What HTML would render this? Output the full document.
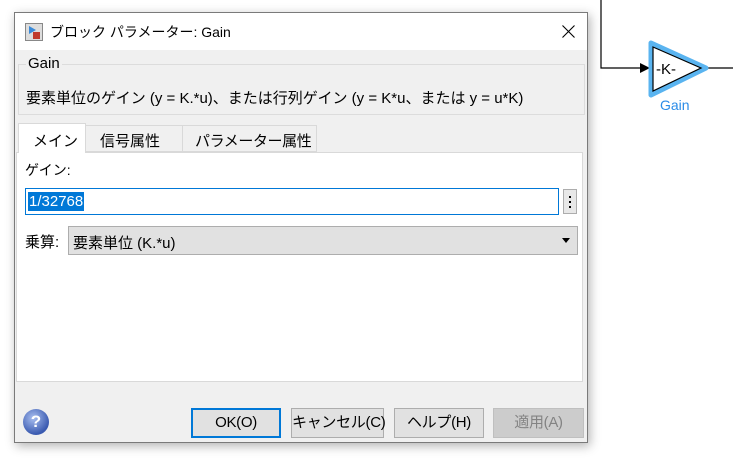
<!DOCTYPE html>
<html><head><meta charset="utf-8"><style>
*{box-sizing:border-box;margin:0;padding:0}
body{width:733px;height:460px;background:#fff;position:relative;overflow:hidden;font-family:"Liberation Sans","Noto Sans CJK JP",sans-serif;color:#000}
.a{position:absolute;white-space:nowrap}
.dlg{left:14px;top:12px;width:574px;height:431px;background:#f0f0f0;border:1px solid #7a7a7a;box-shadow:2px 3px 10px rgba(0,0,0,.3)}
.title{left:0;top:0;width:572px;height:37px;background:#fff}
.btn{top:395px;height:30px;border:1px solid #adadad;background:#e1e1e1;font-size:15px;text-align:center;line-height:28px;letter-spacing:-0.3px}
</style></head><body>
<svg class="a" style="left:0;top:0" width="733" height="460">
<path d="M601 0V68H640" stroke="#000" fill="none" stroke-width="1.2"/>
<path d="M640 63L650 68L640 73Z" fill="#000"/>
<path d="M705 68H733" stroke="#000" stroke-width="1.2"/>
<path d="M651 43L706 68L651 95Z" fill="#fff" stroke="#5ab4f0" stroke-width="5" stroke-linejoin="round"/>
<path d="M653 47L701 68L653 91Z" fill="#fff" stroke="#000" stroke-width="1.2"/>
<text x="656" y="74" font-family="Liberation Sans" font-size="15">-K-</text>
<text x="660" y="110" font-family="Liberation Sans" font-size="14" fill="#2a8ce8">Gain</text>
</svg>
<div class="a dlg">
 <div class="a title">
  <svg class="a" style="left:10px;top:10px" width="18" height="18"><rect x=".5" y=".5" width="17" height="17" fill="#ddd" stroke="#888"/><path d="M4 3L11 7L4 11Z" fill="#3b8ad8"/><rect x="8" y="9" width="7" height="7" fill="#c0392b"/></svg>
  <div class="a" style="left:35px;top:9px;font-size:14px">ブロック パラメーター: Gain</div>
  <svg class="a" style="left:547px;top:12px" width="13" height="13"><path d="M0.5 0.5L12.5 12.5M12.5 0.5L0.5 12.5" stroke="#000" stroke-width="1.1"/></svg>
 </div>
 <div class="a" style="left:3px;top:51px;width:567px;height:51px;border:1px solid #dcdcdc"></div>
 <div class="a" style="left:11px;top:42px;font-size:15px;background:#f0f0f0;padding:0 2px">Gain</div>
 <div class="a" style="left:11px;top:74px;font-size:15px">要素単位のゲイン (y = K.*u)、または行列ゲイン (y = K*u、または y = u*K)</div>
 <div class="a" style="left:1px;top:139px;width:567px;height:230px;background:#fff;border:1px solid #d9d9d9"></div>
 <div class="a" style="left:3px;top:110px;width:68px;height:30px;background:#fff;border:1px solid #d9d9d9;border-bottom:none;font-size:15px;padding:6px 0 0 14px">メイン</div>
 <div class="a" style="left:71px;top:112px;width:97px;height:27px;border:1px solid #d9d9d9;border-left:none;font-size:15px;padding:4px 0 0 14px">信号属性</div>
 <div class="a" style="left:168px;top:112px;width:134px;height:27px;border:1px solid #d9d9d9;border-left:none;font-size:15px;padding:4px 0 0 12px;letter-spacing:-0.4px">パラメーター属性</div>
 <div class="a" style="left:10px;top:147px;font-size:14px">ゲイン:</div>
 <div class="a" style="left:10px;top:175px;width:534px;height:27px;border:1px solid #0078d7;background:#fff"><span class="a" style="left:2px;top:3px;background:#0078d7;color:#fff;font-size:15px;padding:1px 1px">1/32768</span></div>
 <div class="a" style="left:548px;top:176px;width:14px;height:25px;border:1px solid #adadad;background:#e8e8e8">
  <span class="a" style="left:5px;top:6px;width:2px;height:2px;background:#000"></span>
  <span class="a" style="left:5px;top:11px;width:2px;height:2px;background:#000"></span>
  <span class="a" style="left:5px;top:16px;width:2px;height:2px;background:#000"></span>
 </div>
 <div class="a" style="left:10px;top:218px;font-size:15px">乗算:</div>
 <div class="a" style="left:53px;top:213px;width:510px;height:29px;border:1px solid #adadad;background:#e1e1e1;font-size:15px;padding:5px 0 0 4px">要素単位 (K.*u)<span class="a" style="right:7px;top:11px;width:0;height:0;border-left:4px solid transparent;border-right:4px solid transparent;border-top:5px solid #000"></span></div>
 <div class="a" style="left:8px;top:396px;width:26px;height:26px;border-radius:50%;background:radial-gradient(circle at 40% 35%,#a9bff0,#3a5ab0 70%);color:#fff;font-weight:bold;font-size:17px;text-align:center;line-height:26px">?</div>
 <div class="a btn" style="left:176px;width:90px;border:2px solid #0078d7;line-height:26px">OK(O)</div>
 <div class="a btn" style="left:276px;width:93px">キャンセル(C)</div>
 <div class="a btn" style="left:379px;width:90px">ヘルプ(H)</div>
 <div class="a btn" style="left:478px;width:91px;background:#cccccc;border-color:#bfbfbf;color:#838383">適用(A)</div>
</div>
</body></html>
